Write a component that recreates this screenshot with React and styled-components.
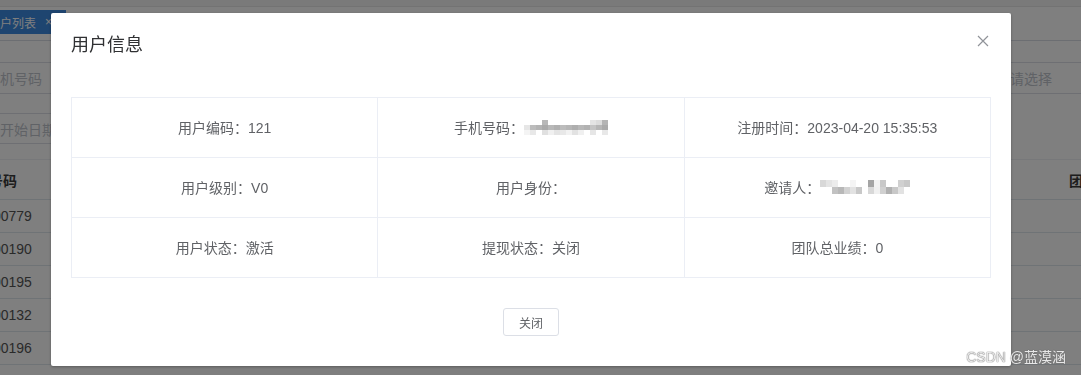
import React from 'react';
import styled, { createGlobalStyle } from 'styled-components';

const GlobalStyle = createGlobalStyle`
  html, body {
    margin: 0;
    padding: 0;
    background: #fff;
    overflow: hidden;
  }
  body {
    font-family: "Liberation Sans", "Noto Sans CJK SC", sans-serif;
    color: #606266;
  }
  * {
    box-sizing: border-box;
  }
`;

/* ---------- page behind the dialog ---------- */

const Page = styled.div`
  width: 1121px;
  margin-left: -40px;
  height: 375px;
  overflow: hidden;
`;

const TopStrip = styled.div`
  height: 7px;
  background: #f5f5f5;
  border-bottom: 1px solid #e6e6e6;
`;

const TagsBar = styled.div`
  height: 34px;
  padding: 3px 0 0 20px;
  border-bottom: 1px solid #d8dce5;
  display: flex;
`;

const Tag = styled.div`
  height: 24px;
  display: flex;
  align-items: center;
  gap: 9px;
  padding: 0 14px 0 8px;
  background: #3d8ae0;
  color: #fff;
  font-size: 12px;
`;

const Main = styled.div`
  padding: 21px 0 0 11px;
`;

const FormRow = styled.div`
  display: grid;
  grid-template-columns: 300px 724px 200px;
  margin-bottom: ${p => p.$gap || 19}px;
`;

const Input = styled.div`
  grid-column: ${p => p.$col || 1};
  height: ${p => p.$h || 32}px;
  border: 1px solid #dcdfe6;
  border-left: none;
  border-right: none;
  padding-left: ${p => p.$pl || 15}px;
  display: flex;
  align-items: center;
  font-size: 14px;
  color: #c0c4cc;
`;

const BgTable = styled.div`
  display: grid;
  grid-template-columns: 120px 1020px 60px;
  margin-left: -42px;
`;

const BgCell = styled.div`
  height: ${p => (p.$head ? 41 : 33)}px;
  border-bottom: 1px solid #dfe6ec;
  display: flex;
  align-items: center;
  justify-content: ${p => (p.$left ? 'flex-start' : 'center')};
  font-size: 14px;
  font-weight: ${p => (p.$head ? 'bold' : 'normal')};
  color: ${p => (p.$head ? '#3a3a3a' : '#555')};
  white-space: nowrap;
  ${p => p.$head && 'border-top: 1px solid #eef0f4;'}
`;

/* ---------- dialog ---------- */

const Overlay = styled.div`
  position: fixed;
  inset: 0;
  background: rgba(0, 0, 0, 0.5);
`;

const Dialog = styled.div`
  position: relative;
  width: 960px;
  margin: 13px 0 0 51px;
  background: #fff;
  border-radius: 2px;
  box-shadow: 0 1px 3px rgba(0, 0, 0, 0.3);
`;

const Header = styled.div`
  padding: 20px 20px 10px;
`;

const Title = styled.span`
  font-size: 18px;
  line-height: 24px;
  color: #303133;
`;

const CloseBtn = styled.button`
  position: absolute;
  top: 20px;
  right: 20px;
  width: 16px;
  height: 16px;
  padding: 0;
  border: none;
  background: transparent;
  display: flex;
  align-items: center;
  justify-content: center;
  cursor: pointer;
`;

const Body = styled.div`
  padding: 30px 20px 20px;
`;

const InfoGrid = styled.div`
  display: grid;
  grid-template-columns: repeat(3, 1fr);
  border-top: 1px solid #ebeef5;
  border-left: 1px solid #ebeef5;
`;

const InfoCell = styled.div`
  height: 60px;
  border-right: 1px solid #ebeef5;
  border-bottom: 1px solid #ebeef5;
  display: flex;
  align-items: center;
  justify-content: center;
  font-size: 14px;
  color: #606266;
  padding-bottom: 1px;
`;

const Footer = styled.div`
  padding: 10px 20px 30px;
  display: flex;
  justify-content: center;
`;

const Button = styled.button`
  height: 28px;
  padding: 0 15px;
  border: 1px solid #dcdfe6;
  border-radius: 3px;
  background: #fff;
  color: #606266;
  font-family: inherit;
  font-size: 12px;
  cursor: pointer;
`;

const Watermark = styled.div`
  position: fixed;
  right: 15px;
  bottom: 9px;
  font-size: 14px;
  color: rgba(255, 255, 255, 0.85);
  text-shadow: 0 0 1px #666, 0 0 1px #666;
`;

function Mosaic({ rows, cw, ch }) {
  const w = rows[0].length * cw;
  const h = rows.length * ch;
  return (
    <svg width={w} height={h} viewBox={`0 0 ${w} ${h}`} style={{ display: 'block' }}>
      {rows.map((row, r) =>
        row.map((c, i) => (
          <rect key={`${r}-${i}`} x={i * cw} y={r * ch} width={cw} height={ch} fill={c} />
        ))
      )}
    </svg>
  );
}

const phoneMosaic = [
  ['#fff', '#fff', '#fff', '#b8b8b8', '#fff', '#fff', '#fff', '#fff', '#fff', '#fff', '#fff', '#e4e4e4', '#dcdcdc', '#b4b4b4'],
  ['#e6e6e6', '#bcbcbc', '#b4b4b4', '#aaaaaa', '#b8b8b8', '#b0b0b0', '#bcbcbc', '#b6b6b6', '#aeaeae', '#b8b8b8', '#b2b2b2', '#c4c4c4', '#b6b6b6', '#aaaaaa'],
  ['#f4f4f4', '#e8e8e8', '#fff', '#e0e0e0', '#f0f0f0', '#e4e4e4', '#e8e8e8', '#f2f2f2', '#e2e2e2', '#f0f0f0', '#fff', '#e6e6e6', '#fff', '#e8e8e8'],
];

const inviterMosaic = [
  ['#d8d8d8', '#e4e4e4', '#ececec', '#fff', '#fff', '#f4f4f4', '#fff', '#fff', '#a4a4a4', '#f2f2f2', '#c8c8c8', '#fff', '#fff', '#d0d0d0', '#c8c8c8'],
  ['#fff', '#fff', '#c2c2c2', '#b8b8b8', '#d2d2d2', '#e2e2e2', '#c8c8c8', '#fff', '#d8d8d8', '#f0f0f0', '#d0d0d0', '#b0b0b0', '#c8c8c8', '#e2e2e2', '#fff'],
];

const bgRows = ['13800000779', '13800000190', '13800000195', '13800000132', '13800000196'];

export default function App() {
  return (
    <>
      <GlobalStyle />
      <Page>
        <TopStrip />
        <TagsBar>
          <Tag>
            用户列表 <span>×</span>
          </Tag>
        </TagsBar>
        <Main>
          <FormRow>
            <Input>手机号码</Input>
            <Input $col={3}>请选择</Input>
          </FormRow>
          <FormRow $gap={15}>
            <Input $h={31} $pl={29}>开始日期</Input>
          </FormRow>
          <BgTable>
            <BgCell $head>手机号码</BgCell>
            <BgCell $head />
            <BgCell $head $left>团队总业绩</BgCell>
            {bgRows.map(n => (
              <React.Fragment key={n}>
                <BgCell>{n}</BgCell>
                <BgCell />
                <BgCell />
              </React.Fragment>
            ))}
          </BgTable>
        </Main>
      </Page>

      <Overlay>
        <Dialog>
          <Header>
            <Title>用户信息</Title>
            <CloseBtn aria-label="关闭">
              <svg width="12" height="12" viewBox="0 0 12 12">
                <path d="M1 1 L11 11 M11 1 L1 11" stroke="#909399" strokeWidth="1.2" fill="none" />
              </svg>
            </CloseBtn>
          </Header>
          <Body>
            <InfoGrid>
              <InfoCell>用户编码：121</InfoCell>
              <InfoCell>
                手机号码：<Mosaic rows={phoneMosaic} cw={6} ch={5} />
              </InfoCell>
              <InfoCell>注册时间：2023-04-20 15:35:53</InfoCell>
              <InfoCell>用户级别：V0</InfoCell>
              <InfoCell>用户身份：</InfoCell>
              <InfoCell>
                邀请人：<Mosaic rows={inviterMosaic} cw={6} ch={7} />
              </InfoCell>
              <InfoCell>用户状态：激活</InfoCell>
              <InfoCell>提现状态：关闭</InfoCell>
              <InfoCell>团队总业绩：0</InfoCell>
            </InfoGrid>
          </Body>
          <Footer>
            <Button>关闭</Button>
          </Footer>
        </Dialog>
      </Overlay>
      <Watermark>CSDN @蓝漠涵</Watermark>
    </>
  );
}
